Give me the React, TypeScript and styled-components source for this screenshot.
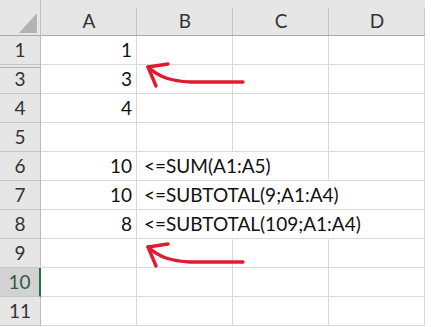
import styled, { createGlobalStyle } from 'styled-components'

const GlobalStyle = createGlobalStyle`
  html, body {
    margin: 0;
    padding: 0;
    background: #ffffff;
  }
  body {
    font-family: Lato, 'Liberation Sans', sans-serif;
  }
`

const columns = ['A', 'B', 'C', 'D']

type Row = {
  num: string
  a?: string
  b?: string
  spill?: number
  hiddenAbove?: boolean
  selected?: boolean
}

// spill = how many columns past B the text runs into (hides the grid line)
const rows: Row[] = [
  { num: '1', a: '1' },
  { num: '3', a: '3', hiddenAbove: true },
  { num: '4', a: '4' },
  { num: '5' },
  { num: '6', a: '10', b: '<=SUM(A1:A5)', spill: 1 },
  { num: '7', a: '10', b: '<=SUBTOTAL(9;A1:A4)', spill: 2 },
  { num: '8', a: '8', b: '<=SUBTOTAL(109;A1:A4)', spill: 2 },
  { num: '9' },
  { num: '10', selected: true },
  { num: '11' },
]

const Sheet = styled.div`
  position: relative;
  width: 431px;
  height: 327px;
  overflow: hidden;
`

const Grid = styled.div`
  display: grid;
  grid-template-columns: 41px repeat(4, 96px);
  grid-auto-rows: 29px;
  grid-template-rows: 36px;
  width: 425px;
`

const Corner = styled.div`
  position: relative;
  background: #e6e6e6;
  border-right: 1px solid #bcbcbc;
  border-bottom: 1px solid #a8a8a8;
  box-sizing: border-box;
`

const CornerTriangle = styled.div`
  position: absolute;
  right: 3px;
  bottom: 2px;
  width: 0;
  height: 0;
  border-left: 18px solid transparent;
  border-bottom: 20px solid #b3b3b3;
`

const ColHeader = styled.div`
  display: flex;
  align-items: flex-end;
  justify-content: center;
  background: #e6e6e6;
  border-bottom: 1px solid #a8a8a8;
  box-sizing: border-box;
  padding-bottom: 3px;
  font-size: 19px;
  color: #333333;
  position: relative;

  &::after {
    content: '';
    position: absolute;
    right: 0;
    top: 8px;
    bottom: 0;
    width: 1px;
    background: #c6c6c6;
  }
`

const RowHeader = styled.div<{ $selected?: boolean; $hiddenAbove?: boolean }>`
  display: flex;
  align-items: flex-end;
  justify-content: center;
  box-sizing: border-box;
  padding-bottom: 3px;
  font-size: 19px;
  background: ${(p) => (p.$selected ? '#d2d2d2' : '#e6e6e6')};
  color: ${(p) => (p.$selected ? '#2e5e44' : '#333333')};
  border-bottom: 1px solid #c6c6c6;
  border-right: ${(p) => (p.$selected ? '2px solid #217346' : '1px solid #bcbcbc')};
  box-shadow: ${(p) => (p.$hiddenAbove ? 'inset 0 2px 0 #e6e6e6, inset 0 3px 0 #b8b8b8' : 'none')};
`

const Cell = styled.div<{ $align?: 'left' | 'right'; $spilled?: boolean }>`
  display: flex;
  align-items: flex-end;
  justify-content: ${(p) => (p.$align === 'right' ? 'flex-end' : 'flex-start')};
  box-sizing: border-box;
  padding: 0 4px 3px 7px;
  font-size: 19px;
  color: #111111;
  white-space: nowrap;
  border-right: 1px solid ${(p) => (p.$spilled ? 'transparent' : '#d9d9d9')};
  border-bottom: 1px solid #d9d9d9;
  overflow: visible;
  position: relative;
  z-index: 1;
`

const EmptyCell = styled(Cell)`
  z-index: 0;
`

const Arrows = styled.svg`
  position: absolute;
  left: 0;
  top: 0;
  pointer-events: none;
  z-index: 2;
`

const arrowPath = (dy: number) =>
  `M243 ${82 + dy} L190 ${82 + dy} C172 ${81 + dy} 160 ${78 + dy} 148 ${67 + dy}`

const arrowHead = (dy: number) =>
  `M168 ${64 + dy} L148 ${67 + dy} L156 ${86 + dy}`

export default function App() {
  return (
    <>
      <GlobalStyle />
      <Sheet>
        <Grid>
          <Corner>
            <CornerTriangle />
          </Corner>
          {columns.map((c) => (
            <ColHeader key={c}>{c}</ColHeader>
          ))}
          {rows.map((r) => (
            <RowCells key={r.num} row={r} />
          ))}
        </Grid>
        <Arrows width="431" height="327" viewBox="0 0 431 327">
          {[0, 180].map((dy) => (
            <g
              key={dy}
              fill="none"
              stroke="#e01b2e"
              strokeWidth="3.4"
              strokeLinecap="round"
              strokeLinejoin="round"
            >
              <path d={arrowPath(dy)} />
              <path d={arrowHead(dy)} />
            </g>
          ))}
        </Arrows>
      </Sheet>
    </>
  )
}

function RowCells({ row }: { row: Row }) {
  const spill = row.spill ?? 0
  return (
    <>
      <RowHeader $selected={row.selected} $hiddenAbove={row.hiddenAbove}>
        {row.num}
      </RowHeader>
      <Cell $align="right">{row.a}</Cell>
      {row.b ? <Cell $spilled={spill >= 1}>{row.b}</Cell> : <EmptyCell />}
      <EmptyCell $spilled={spill >= 2} />
      <EmptyCell />
    </>
  )
}
